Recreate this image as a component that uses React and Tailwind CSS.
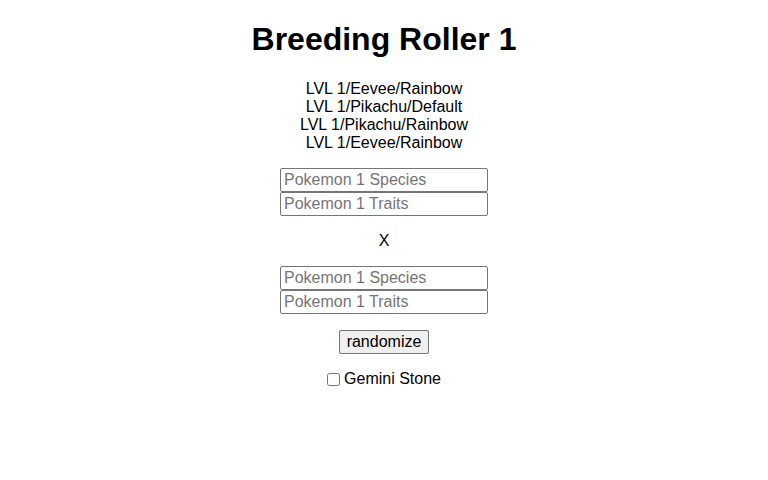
export default function App() {
  const lines = [
    "LVL 1/Eevee/Rainbow",
    "LVL 1/Pikachu/Default",
    "LVL 1/Pikachu/Rainbow",
    "LVL 1/Eevee/Rainbow",
  ];
  const inputCls =
    "block w-[208px] h-[24px] border border-[#767676] rounded-[2px] px-[3px] text-[16px] text-black placeholder:text-[#757575] bg-white outline-none";
  return (
    <div
      className="flex flex-col items-center bg-white text-black min-h-[480px]"
      style={{ fontFamily: '"Liberation Sans", Arial, sans-serif' }}
    >
      <h1 className="mt-[21px] mb-[22px] text-[32px] leading-[37px] font-bold">
        Breeding Roller 1
      </h1>
      <div className="flex flex-col items-center text-[16px] leading-[18px]">
        {lines.map((l, i) => (
          <div key={i}>{l}</div>
        ))}
      </div>
      <div className="mt-[16px] flex flex-col">
        <input className={inputCls} placeholder="Pokemon 1 Species" />
        <input className={inputCls} placeholder="Pokemon 1 Traits" />
      </div>
      <p className="my-[16px] text-[16px] leading-[18px]">X</p>
      <div className="flex flex-col">
        <input className={inputCls} placeholder="Pokemon 1 Species" />
        <input className={inputCls} placeholder="Pokemon 1 Traits" />
      </div>
      <button className="mt-[16px] h-[24px] px-[7px] border border-[#767676] rounded-[2px] bg-[#efefef] text-[16px] leading-[18px]">
        randomize
      </button>
      <label className="mt-[16px] flex items-center text-[16px] leading-[18px]">
        <input type="checkbox" className="w-[13px] h-[13px] m-0" />
        <span className="ml-[4px]">Gemini Stone</span>
      </label>
    </div>
  );
}
